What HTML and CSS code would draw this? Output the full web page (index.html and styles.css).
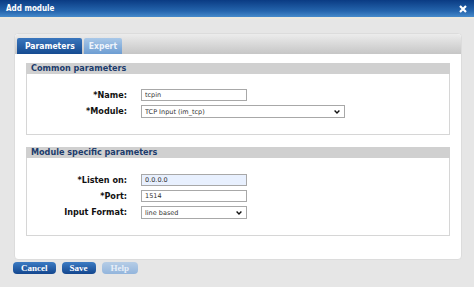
FILE: index.html
```html
<!DOCTYPE html>
<html lang="en">
<head>
    <meta charset="utf-8">
    <title>Add module</title>
    <link rel="stylesheet" href="styles.css">
</head>
<body>
<div class="titlebar">
    <span class="title">Add module</span>
    <svg class="close" viewBox="0 0 8 8" width="8" height="8">
        <path d="M1 1 L7 7 M7 1 L1 7" stroke="white" stroke-width="2.2" />
    </svg>
</div>
<div class="content">
    <div class="panel">
        <div class="tabs">
            <span class="tab active">Parameters</span>
            <span class="tab">Expert</span>
        </div>
        <div class="panel-body">
            <section class="group">
                <h2>Common parameters</h2>
                <div class="fields">
                    <label for="name">*Name:</label>
                    <input id="name" class="short" type="text" value="tcpin">
                    <label for="module">*Module:</label>
                    <span class="select long">
                        <select id="module"><option>TCP Input (im_tcp)</option></select>
                        <svg viewBox="0 0 6 4" width="6" height="4"><path d="M0.6 0.6 L3 3 L5.4 0.6" fill="none" stroke="#111" stroke-width="1.4"/></svg>
                    </span>
                </div>
            </section>
            <section class="group">
                <h2>Module specific parameters</h2>
                <div class="fields">
                    <label for="listen">*Listen on:</label>
                    <input id="listen" class="short filled" type="text" value="0.0.0.0">
                    <label for="port">*Port:</label>
                    <input id="port" class="short" type="text" value="1514">
                    <label for="format">Input Format:</label>
                    <span class="select short">
                        <select id="format"><option>line based</option></select>
                        <svg viewBox="0 0 6 4" width="6" height="4"><path d="M0.6 0.6 L3 3 L5.4 0.6" fill="none" stroke="#111" stroke-width="1.4"/></svg>
                    </span>
                </div>
            </section>
        </div>
    </div>
    <div class="buttons">
        <button type="button">Cancel</button>
        <button type="button">Save</button>
        <button type="button" class="disabled">Help</button>
    </div>
</div>
</body>
</html>
```

FILE: styles.css
```css
/* Dialog frame */
body {
    margin: 0;
    background: #e6e6e6;
    font-family: "DejaVu Sans Condensed", "DejaVu Sans", sans-serif;
    color: #111;
}
.titlebar {
    display: flex;
    align-items: center;
    justify-content: space-between;
    height: 17px;
    padding: 0 7px 0 6px;
    background: linear-gradient(#0a3b83, #2565ad 65%, #468aca);
    border-bottom: 2px solid #ece9df;
}
.title {
    color: white;
    font-weight: bold;
    font-size: 8px;
}
.content {
    padding: 14px 12px 0 14px;
}

/* Tab panel */
.panel {
    background: white;
    border: 1px solid #dcdcdc;
    border-radius: 4px;
    padding-bottom: 23px;
}
.tabs {
    display: flex;
    align-items: flex-end;
    gap: 2px;
    height: 20px;
    padding-left: 2px;
    background: linear-gradient(#ececec, #c6c6c6);
    border-radius: 4px 4px 0 0;
    box-sizing: border-box;
}
.tab {
    height: 16px;
    line-height: 16px;
    padding: 0 5px;
    font-size: 8.5px;
    font-weight: bold;
    color: #eef4fb;
    background: linear-gradient(#a9c8e8, #6d9dd2);
    border-radius: 2px 2px 0 0;
}
.tab.active {
    padding: 0 7px 0 8px;
    color: white;
    background: linear-gradient(#3a76bd, #164b91);
}
.panel-body {
    padding: 9px 11px 0 11px;
}

/* Field groups */
.group {
    border: 1px solid #d6d6d6;
    border-top: none;
}
.group + .group {
    margin-top: 12px;
}
.group h2 {
    margin: 0 -1px;
    height: 11px;
    line-height: 11px;
    padding-left: 5px;
    background: #d0d0d0;
    color: #1c3c6c;
    font-size: 9px;
    font-weight: bold;
}
.fields {
    display: grid;
    grid-template-columns: 100px 1fr;
    grid-auto-rows: 16px;
    column-gap: 14px;
    align-items: start;
    padding: 15px 0 13px;
}
.group + .group .fields {
    padding-top: 16px;
}
label {
    text-align: right;
    font-size: 9px;
    font-weight: bold;
    line-height: 12px;
}
input, select {
    display: block;
    box-sizing: border-box;
    height: 12px;
    margin: 0;
    padding: 0 3px;
    border: 1px solid #a8a8a8;
    font-family: "DejaVu Sans", sans-serif;
    font-size: 6.5px;
    color: #333;
    background: white;
    outline: none;
}
input.filled {
    background: #e8f0fe;
}
.short {
    width: 106px;
}
.long {
    width: 204px;
}
.select {
    position: relative;
    display: block;
    height: 13px;
}
.select select {
    -webkit-appearance: none;
    appearance: none;
    width: 100%;
    height: 13px;
}
.select svg {
    /* chevron drawn over the native box */
    position: absolute;
    right: 5px;
    top: 5px;
}

/* Buttons */
.buttons {
    display: flex;
    gap: 6px;
    margin-top: 2px;
    margin-left: -1px;
}
button {
    height: 12px;
    padding: 0 8px;
    border: none;
    border-radius: 4px;
    background: linear-gradient(#3c7cc4, #13468e);
    color: white;
    font-family: "Liberation Serif", serif;
    font-weight: bold;
    font-size: 9px;
    line-height: 12px;
}
button.disabled {
    padding: 0 9px;
    background: linear-gradient(#b6cde6, #93b5dc);
    color: #e8eff8;
}
```
